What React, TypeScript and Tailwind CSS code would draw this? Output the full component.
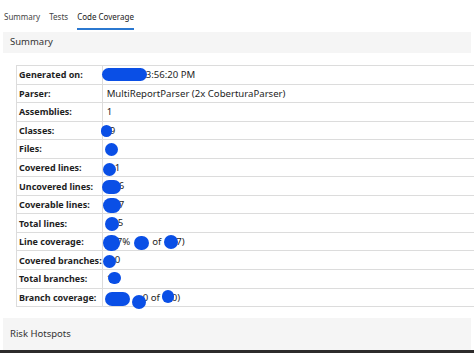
import React from "react";

type Blob = { left: number; top: number; w: number; h: number };

type Row = { label: string; value: React.ReactNode; blobs?: Blob[] };

// blob positions are relative to the value cell's top-left corner
const rows: Row[] = [
  {
    label: "Generated on:",
    value: <span className="ml-[43px]">3:56:20 PM</span>,
    blobs: [{ left: -1, top: 2, w: 45, h: 13 }],
  },
  { label: "Parser:", value: <span className="ml-[4px]">MultiReportParser (2x CoberturaParser)</span> },
  { label: "Assemblies:", value: <span className="ml-[4px]">1</span> },
  { label: "Classes:", value: <span className="ml-[7px]">9</span>, blobs: [{ left: -2, top: 3, w: 11, h: 12 }] },
  { label: "Files:", value: null, blobs: [{ left: 2, top: 3, w: 13, h: 13 }] },
  { label: "Covered lines:", value: <span className="ml-[12px]">1</span>, blobs: [{ left: 0, top: 4, w: 13, h: 13 }] },
  { label: "Uncovered lines:", value: <span className="ml-[16px]">6</span>, blobs: [{ left: -1, top: 3, w: 19, h: 14 }] },
  { label: "Coverable lines:", value: <span className="ml-[16px]">7</span>, blobs: [{ left: 0, top: 2, w: 18, h: 15 }] },
  { label: "Total lines:", value: <span className="ml-[15px]">5</span>, blobs: [{ left: 2, top: 3, w: 14, h: 14 }] },
  {
    label: "Line coverage:",
    value: (
      <>
        <span className="ml-[14px]">7%</span>
        <span className="ml-[22px]">of</span>
        <span className="ml-[15px]">7)</span>
      </>
    ),
    blobs: [
      { left: 0, top: 2, w: 17, h: 16 },
      { left: 31, top: 3, w: 15, h: 14 },
      { left: 61, top: 2, w: 14, h: 14 },
    ],
  },
  { label: "Covered branches:", value: <span className="ml-[12px]">0</span>, blobs: [{ left: 0, top: 4, w: 13, h: 13 }] },
  { label: "Total branches:", value: <span className="ml-[4px]">1</span>, blobs: [{ left: 5, top: 2, w: 13, h: 12 }] },
  {
    label: "Branch coverage:",
    value: (
      <>
        <span className="ml-[40px]">0 of</span>
        <span className="ml-[12px]">0)</span>
      </>
    ),
    blobs: [
      { left: 2, top: 3, w: 25, h: 14 },
      { left: 29, top: 6, w: 14, h: 14 },
      { left: 59, top: 1, w: 12, h: 13 },
    ],
  },
];

export default function App() {
  return (
    <div
      className="w-[474px] h-[353px] overflow-hidden bg-white text-[#1e1e1e] flex flex-col"
      style={{ fontFamily: "'Noto Sans', 'Open Sans', Arial, sans-serif" }}
    >
      {/* tabs */}
      <div className="shrink-0 flex items-end h-[30px] pl-[4px] gap-[9px] text-[8px] text-[#444]">
        <div className="pb-[7px]">Summary</div>
        <div className="pb-[7px]">Tests</div>
        <div className="pb-[5px] border-b-2 border-[#2b78d0] text-[#222]">Code Coverage</div>
      </div>

      {/* summary header */}
      <div className="shrink-0 mx-[3px] mt-[2px] h-[21px] bg-[#f5f5f5] flex items-center pl-[7px] text-[9.5px] text-[#333]">
        Summary
      </div>

      {/* table */}
      <div className="shrink-0 pl-[16px] pt-[12px] h-[265px]">
        <table className="border-collapse w-[480px] text-[9.6px]">
          <tbody>
            {rows.map((r) => (
              <tr key={r.label} className="h-[18.55px]">
                <td className="w-[85px] border border-[#dcdcdc] pl-[2px] text-[9px] font-bold whitespace-nowrap leading-none">
                  {r.label}
                </td>
                <td className="relative border border-[#dcdcdc] p-0 leading-none whitespace-nowrap">
                  {r.value}
                  {r.blobs?.map((b, i) => (
                    <span
                      key={i}
                      className="absolute rounded-full bg-[#0a4fe6]"
                      style={{ left: b.left, top: b.top, width: b.w, height: b.h }}
                    />
                  ))}
                </td>
              </tr>
            ))}
          </tbody>
        </table>
      </div>

      {/* risk hotspots */}
      <div className="shrink-0 mx-[3px] h-[32px] bg-[#f5f5f5] flex items-center pl-[7px] text-[9.5px] text-[#333]">
        Risk Hotspots
      </div>
      <div className="flex-1 bg-[#2d2b2b]" />
    </div>
  );
}
